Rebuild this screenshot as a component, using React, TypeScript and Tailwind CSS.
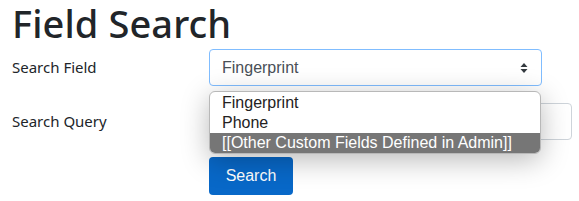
import React from "react";

const sans = "font-['Noto_Sans','Open_Sans',sans-serif]";
const arial = "font-['Liberation_Sans',Arial,sans-serif]";

export default function App() {
  const options = ["Fingerprint", "Phone", "[[Other Custom Fields Defined in Admin]]"];
  return (
    <div className="w-[579px] h-[201px] overflow-hidden bg-white pl-3 text-[#212529]">
      <h1 className={`${sans} text-[38px] font-medium leading-[46px] tracking-[0.1px]`}>
        Field Search
      </h1>

      <div className="mt-[3px] flex items-center">
        <label className={`${sans} w-[197px] text-[15px]`}>Search Field</label>
        <div className="relative">
          <div
            className={`${arial} flex h-[37px] w-[333px] items-center justify-between rounded-[4px] border border-[#80bdff] px-3 text-[16px] text-[#495057]`}
          >
            <span>Fingerprint</span>
            <svg width="8" height="12" viewBox="0 0 8 12" className="mr-[1px]">
              <path d="M4 1 L7.5 5 H0.5 Z" fill="#343a40" />
              <path d="M4 11 L7.5 7 H0.5 Z" fill="#343a40" />
            </svg>
          </div>
          {/* open option list */}
          <div className="absolute left-0 top-[42px] z-10 w-[332px] overflow-hidden rounded-[6px] border border-[#b8b8b8] bg-white pt-[1px] shadow-[0_6px_28px_rgba(0,0,0,0.28)]">
            {options.map((o, i) => (
              <div
                key={o}
                className={`${arial} px-3 text-[16px] leading-[20px] ${
                  i === 2 ? "bg-[#767676] text-white" : "text-[#222]"
                }`}
              >
                {o}
              </div>
            ))}
          </div>
        </div>
      </div>

      <div className="mt-[17px] flex items-center">
        <label className={`${sans} w-[197px] text-[15px]`}>Search Query</label>
        <div className="h-[37px] w-[363px] rounded-[4px] border border-[#ced4da]" />
      </div>

      <button
        className={`${arial} ml-[197px] mt-[17px] h-[38px] w-[84px] rounded-[4px] bg-[#0868c8] text-[16px] text-white`}
      >
        Search
      </button>
    </div>
  );
}
